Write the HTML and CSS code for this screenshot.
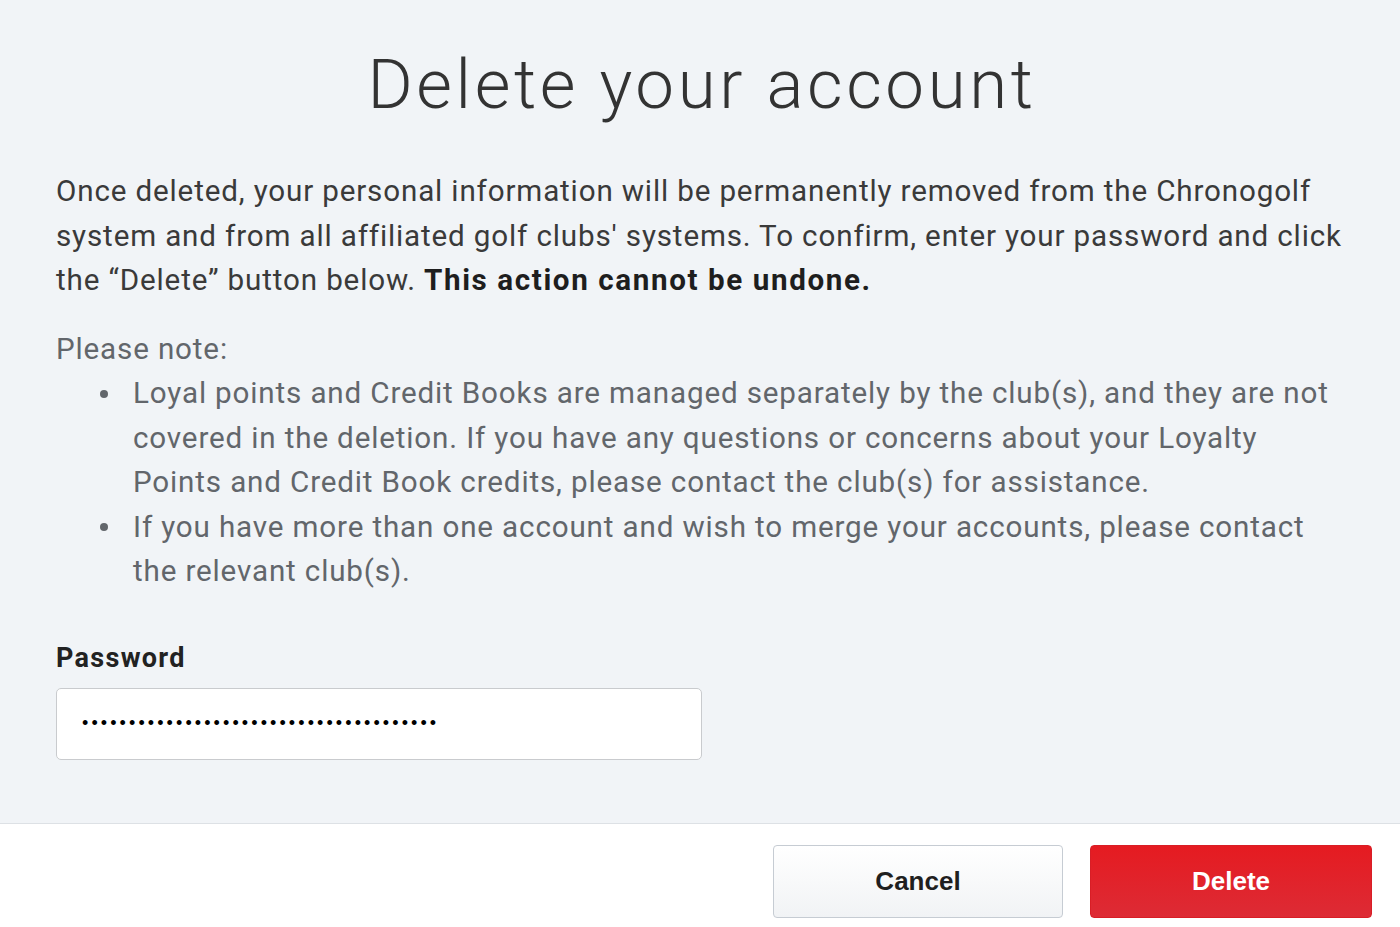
FILE: index.html
```html
<!DOCTYPE html>
<html lang="en">
<head>
<meta charset="utf-8">
<title>Delete your account</title>
<link rel="stylesheet" href="styles.css">
</head>
<body>
<div class="modal">
  <div class="modal-body">
    <h1 class="title">Delete your account</h1>
    <p class="intro">Once deleted, your personal information will be permanently removed from the Chronogolf system and from all affiliated golf clubs' systems. To confirm, enter your password and click the “Delete” button below. <strong>This action cannot be undone.</strong></p>
    <div class="note">
      <p class="note-title">Please note:</p>
      <ul class="note-list">
        <li>Loyal points and Credit Books are managed separately by the club(s), and they are not covered in the deletion. If you have any questions or concerns about your Loyalty Points and Credit Book credits, please contact the club(s) for assistance.</li>
        <li>If you have more than one account and wish to merge your accounts, please contact the relevant club(s).</li>
      </ul>
    </div>
    <label class="field-label" for="pw">Password</label>
    <input class="field-input" id="pw" type="password" value="abcdefghijklmnopqrstuvwxyzabcdefghijkl">
  </div>
  <div class="modal-footer">
    <button class="btn btn-cancel" type="button">Cancel</button>
    <button class="btn btn-delete" type="button">Delete</button>
  </div>
</div>
</body>
</html>
```

FILE: styles.css
```css
* { box-sizing: border-box; }
html, body { margin: 0; padding: 0; }
body {
  background: #ffffff;
  font-family: Roboto, "Liberation Sans", sans-serif;
}
.modal {
  width: 1400px;
  height: 927px;
  display: flex;
  flex-direction: column;
}
.modal-body {
  background: #f1f4f7;
  padding: 40px 52px 63px 56px;
  border-bottom: 1px solid #dde1e5;
  display: flex;
  flex-direction: column;
}
.title {
  margin: 0 0 39px 0;
  text-align: center;
  font-weight: 300;
  font-size: 69px;
  line-height: 90px;
  letter-spacing: 3.6px;
  color: #333333;
}
.intro {
  margin: 0 0 24px 0;
  font-size: 29.6px;
  line-height: 44.5px;
  letter-spacing: 0.85px;
  color: #3a3a3a;
}
.intro strong {
  font-weight: 700;
  color: #1e1e1e;
  letter-spacing: 1.6px;
}
.note {
  color: #62666b;
  font-size: 29.6px;
  line-height: 44.5px;
  letter-spacing: 0.85px;
}
.note-title { margin: 0; }
.note-list {
  margin: 0 0 48px 0;
  padding-left: 77px;
  list-style: none;
}
.note-list li::before {
  content: "";
  display: inline-block;
  width: 8px;
  height: 8px;
  border-radius: 50%;
  background: #62666b;
  vertical-align: middle;
  margin: -3px 25px 0 -33px;
}
.field-label {
  font-size: 27px;
  font-weight: 700;
  letter-spacing: 1.3px;
  color: #222222;
  line-height: 32px;
  margin-bottom: 14px;
}
.field-input {
  width: 646px;
  height: 72px;
  border: 1.5px solid #c9cbce;
  border-radius: 5px;
  background: #ffffff;
  padding: 0 0 0 25px;
  font-family: "Liberation Sans", sans-serif;
  font-size: 18px;
  letter-spacing: 3.1px;
  color: #000000;
  outline: none;
}
.modal-footer {
  flex: 1;
  background: #ffffff;
  display: flex;
  justify-content: flex-end;
  align-items: flex-start;
  gap: 27px;
  padding: 21px 28px 0 0;
}
.btn {
  height: 73px;
  border-radius: 4px;
  font-family: "Liberation Sans", Arial, sans-serif;
  font-weight: 700;
  font-size: 26px;
  cursor: pointer;
}
.btn-cancel {
  width: 290px;
  background: linear-gradient(#ffffff, #f1f3f5);
  border: 1.5px solid #c6ccd3;
  color: #1f1f1f;
}
.btn-delete {
  width: 282px;
  background: linear-gradient(#e51b21, #dd2b35);
  border: 1px solid #d81e26;
  color: #ffffff;
}
```
